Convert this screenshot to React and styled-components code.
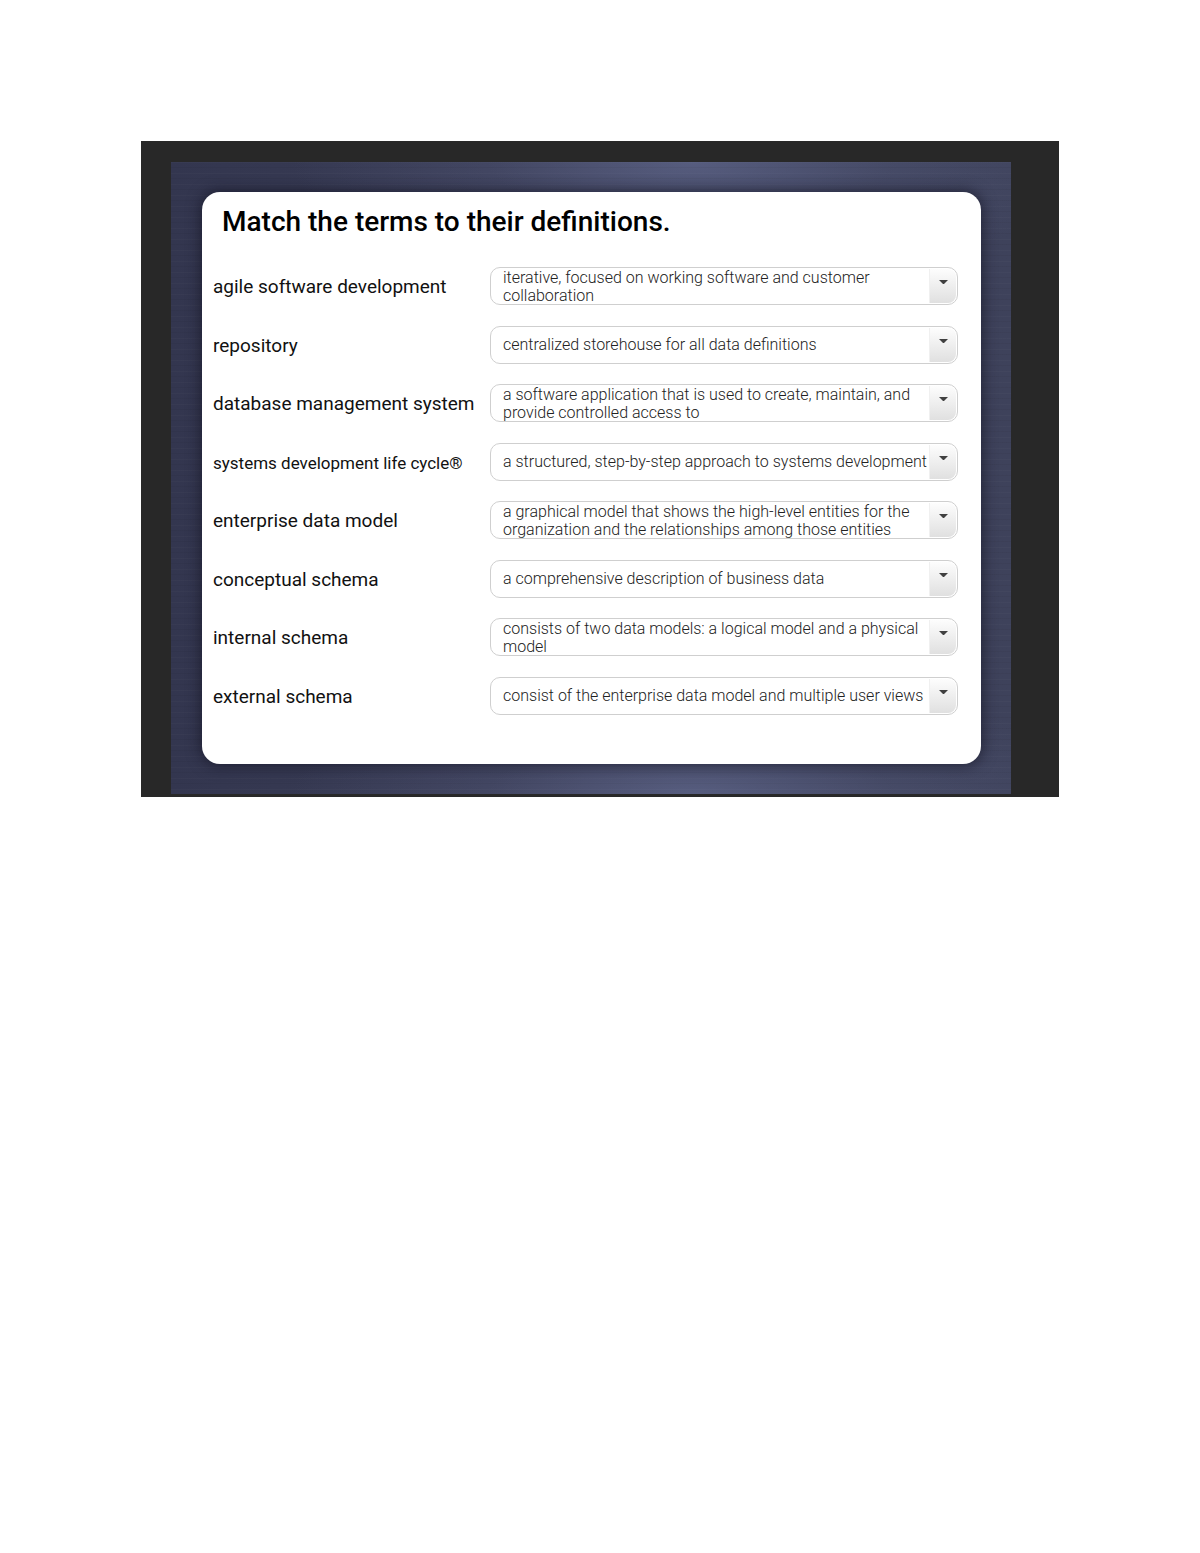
import React from 'react';
import styled, { createGlobalStyle } from 'styled-components';

const GlobalStyle = createGlobalStyle`
  *, *::before, *::after { box-sizing: border-box; }
  body {
    margin: 0;
    background: #fff;
    font-family: Roboto, "Liberation Sans", sans-serif;
  }
`;

const Page = styled.main`
  padding: 141px;
`;

const Stage = styled.section`
  padding: 21px 48px 3px 30px;
  background: #282828;
`;

const BrushedPanel = styled.div`
  padding: 30px 30px 30px 31px;
  background:
    repeating-linear-gradient(
      180deg,
      rgba(255, 255, 255, 0.02) 0 1px,
      transparent 1px 5px,
      rgba(0, 0, 0, 0.04) 5px 6px,
      transparent 6px 11px
    ),
    radial-gradient(ellipse 400px 120px at 62% 0, rgba(104, 112, 152, 0.6), rgba(104, 112, 152, 0.2) 50%, transparent),
    radial-gradient(ellipse 400px 120px at 62% 100%, rgba(104, 112, 152, 0.6), rgba(104, 112, 152, 0.2) 50%, transparent),
    linear-gradient(90deg, #33364f, #3b3e57 50%, #3e425b);
`;

const Card = styled.form`
  display: flex;
  flex-direction: column;
  min-height: 572px;
  padding: 10px 23px 49px 11px;
  border-radius: 18px;
  background: #fff;
  box-shadow: 0 0 14px 2px rgba(16, 17, 32, 0.6);
`;

const Title = styled.h1`
  margin: 0 0 25px;
  padding-left: 9px;
  font-size: 28px;
  font-weight: 500;
  line-height: 40px;
  color: #000;
`;

const PairList = styled.ul`
  display: flex;
  flex: 1;
  flex-direction: column;
  justify-content: space-between;
  margin: 0;
  padding: 0;
  list-style: none;
`;

const Pair = styled.li`
  display: grid;
  grid-template-columns: 277px 1fr;
  align-items: center;
`;

const Term = styled.label`
  padding-top: 2px;
  font-size: ${({ $small }) => ($small ? 17 : 19)}px;
  line-height: 24px;
  white-space: nowrap;
  color: #111;
`;

const Picker = styled.div`
  position: relative;
`;

const Select = styled.select`
  appearance: none;
  display: block;
  width: 100%;
  height: 38px;
  padding: 1px 30px 0 12px;
  border: 1px solid #cfcfcf;
  border-radius: 10px;
  background: #fff;
  font-family: inherit;
  font-size: 16px;
  font-weight: 300;
  line-height: 18px;
  white-space: normal;
  color: #222;
`;

const Toggle = styled.span`
  position: absolute;
  inset: 2px 2px 2px auto;
  display: flex;
  justify-content: center;
  width: 27px;
  padding-top: 11px;
  border-left: 1px solid #f0f0f0;
  border-radius: 0 8px 8px 0;
  background: linear-gradient(180deg, #fdfdfd, #e0e0e0);
  pointer-events: none;
`;

const Arrow = styled.svg`
  width: 9px;
  height: 5px;
  fill: #404040;
`;

const pairs = [
  { term: 'agile software development', definition: 'iterative, focused on working software and customer collaboration' },
  { term: 'repository', definition: 'centralized storehouse for all data definitions' },
  { term: 'database management system', definition: 'a software application that is used to create, maintain, and provide controlled access to' },
  { term: 'systems development life cycle®', definition: 'a structured, step-by-step approach to systems development', small: true },
  { term: 'enterprise data model', definition: 'a graphical model that shows the high-level entities for the organization and the relationships among those entities' },
  { term: 'conceptual schema', definition: 'a comprehensive description of business data' },
  { term: 'internal schema', definition: 'consists of two data models: a logical model and a physical model' },
  { term: 'external schema', definition: 'consist of the enterprise data model and multiple user views' },
];

function MatchRow({ id, term, definition, small }) {
  return (
    <Pair>
      <Term htmlFor={id} $small={small}>{term}</Term>
      <Picker>
        <Select id={id} defaultValue={definition}>
          <option>{definition}</option>
        </Select>
        <Toggle aria-hidden="true">
          <Arrow viewBox="0 0 9 5"><path d="M0 0h9L5 4H4z" /></Arrow>
        </Toggle>
      </Picker>
    </Pair>
  );
}

export default function App() {
  return (
    <Page>
      <GlobalStyle />
      <Stage>
        <BrushedPanel>
          <Card>
            <Title>Match the terms to their definitions.</Title>
            <PairList>
              {pairs.map((pair, index) => (
                <MatchRow key={pair.term} id={`term-${index}`} {...pair} />
              ))}
            </PairList>
          </Card>
        </BrushedPanel>
      </Stage>
    </Page>
  );
}
